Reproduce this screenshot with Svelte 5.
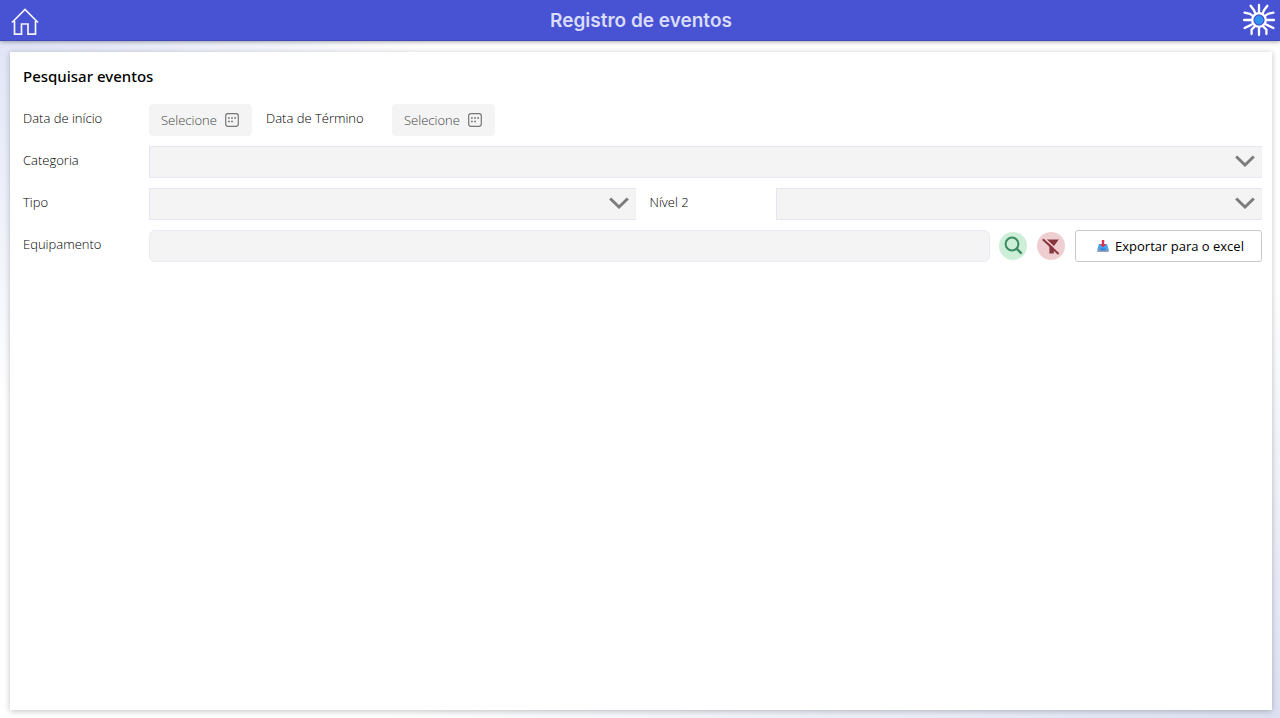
<script>
  let category = $state('');
  let type = $state('');
  let level = $state('');
  let equipment = $state('');
</script>

{#snippet calendar()}
  <svg class="calendar" viewBox="0 0 14 14" aria-hidden="true">
    <rect x="0.7" y="0.7" width="12.6" height="12.6" rx="2.2" fill="none" stroke="#777" stroke-width="1.2" />
    <path d="M3 5h1.8M6.1 5h1.8M9.2 5h1.8M3 8.5h1.8M6.1 8.5h1.8" stroke="#777" stroke-width="1.5" />
  </svg>
{/snippet}

{#snippet chevron()}
  <svg class="chevron" viewBox="0 0 20 12" aria-hidden="true">
    <path d="M1.2 1.5L10 10L18.8 1.5" fill="none" stroke="#7d7d7d" stroke-width="3" />
  </svg>
{/snippet}

<div class="page">
  <header>
    <a class="home" href="#home" aria-label="Início">
      <svg viewBox="0 0 28 28" aria-hidden="true">
        <path d="M1 14.5L14 1.5L27 14.5M3.5 13V26.2H10.5V16H17V26.2H24.5V13" fill="none" stroke="#f4f4ff" stroke-width="1.7" />
      </svg>
    </a>
    <h1>Registro de eventos</h1>
    <svg class="logo" viewBox="-17 -17 34 34" aria-hidden="true">
      <g fill="none" stroke="#fff" stroke-width="2.3" stroke-linecap="round" stroke-linejoin="round">
        <circle r="6.8" />
        <path d="M0 -7V-15M0 7V15M-7 0H-15M7 0H15" />
        <path d="M3.6 -6L5 -9.8L8.4 -14.2M5.8 -3.8L9 -6.2L14.4 -7.4M5.8 3.8L9.4 5.6L14.4 8M3.8 6L7.4 9.6V14M-3.8 6L-7.4 9.6V14M-5.8 3.8L-9.4 5.6L-14.4 8M-5.8 -3.8L-9 -6.2L-14.4 -7.4M-3.6 -6L-5 -9.8L-8.4 -14.2" />
      </g>
      <circle r="4.4" fill="#3193ee" />
    </svg>
  </header>

  <main>
    <h2>Pesquisar eventos</h2>
    <form>
      <div class="row">
        <label for="start">Data de início</label>
        <button id="start" class="date" type="button">Selecione {@render calendar()}</button>
        <label class="next" for="end">Data de Término</label>
        <button id="end" class="date" type="button">Selecione {@render calendar()}</button>
      </div>
      <div class="row">
        <label for="category">Categoria</label>
        <div class="pick">
          <select id="category" bind:value={category}><option value=""></option></select>
          {@render chevron()}
        </div>
      </div>
      <div class="row">
        <label for="type">Tipo</label>
        <div class="pick">
          <select id="type" bind:value={type}><option value=""></option></select>
          {@render chevron()}
        </div>
        <label class="next" for="level">Nível 2</label>
        <div class="pick">
          <select id="level" bind:value={level}><option value=""></option></select>
          {@render chevron()}
        </div>
      </div>
      <div class="row">
        <label for="equipment">Equipamento</label>
        <input id="equipment" type="text" bind:value={equipment} />
        <div class="actions">
          <button class="round search" type="button" aria-label="Pesquisar">
            <svg viewBox="0 0 28 28" aria-hidden="true">
              <g fill="none" stroke="#3c8a60" stroke-width="2">
                <circle cx="13" cy="12" r="6.4" />
                <path d="M17.6 16.6L22.6 21.6" stroke-width="2.4" />
              </g>
            </svg>
          </button>
          <button class="round clear" type="button" aria-label="Limpar filtros">
            <svg viewBox="0 0 28 28" aria-hidden="true">
              <path d="M9.5 7.5H21.8L16.8 14.2V21.5H12.4V14.2Z" fill="#87353f" />
              <path d="M7.6 6.4L23.2 21" stroke="#efced2" stroke-width="1.6" />
              <path d="M5.8 7.2L21.6 22" stroke="#87353f" stroke-width="1.9" />
            </svg>
          </button>
          <button class="export" type="button">
            <svg viewBox="0 0 12 14" aria-hidden="true">
              <path d="M2 5H10L11.5 10V12.5H0.5V10Z" fill="#46a5ee" />
              <path d="M0.5 10.5H11.5V12.8H0.5Z" fill="#8796b8" />
              <path d="M3 9.5H9L8 11.2H4Z" fill="#2f7fd6" />
              <path d="M4.8 1H7.2V5H9.2L6 8.6L2.8 5H4.8Z" fill="#d63350" />
            </svg>
            Exportar para o excel
          </button>
        </div>
      </div>
    </form>
  </main>
</div>

<style>
  :global(body) {
    margin: 0;
  }

  .page {
    box-sizing: border-box;
    min-height: 100vh;
    display: flex;
    flex-direction: column;
    font-family: 'Open Sans', sans-serif;
    font-size: 13px;
    font-weight: 300;
    color: #000;
    background:
      radial-gradient(ellipse 420px 400px at 0 0, #dde2f6, transparent),
      radial-gradient(ellipse 900px 420px at 100% 100%, #dce0f2, transparent),
      #fff;
  }

  header {
    height: 40px;
    display: grid;
    grid-template-columns: 1fr auto 1fr;
    align-items: center;
    padding: 0 4px 0 11px;
    background: #4853d4;
    border-bottom: 1px solid #4049bc;
    box-shadow: 0 1px 4px rgba(0, 0, 0, 0.35);
  }

  .home {
    width: 28px;
    height: 28px;
    margin-top: 3px;
  }

  .home svg {
    display: block;
  }

  h1 {
    margin: 0 5px 0 0;
    font-family: Inter, sans-serif;
    font-size: 19px;
    font-weight: 600;
    color: #d9dcfa;
  }

  .logo {
    width: 34px;
    height: 34px;
    justify-self: end;
  }

  main {
    flex: 1;
    margin: 11px 8px 8px 10px;
    padding: 13px 10px 13px 13px;
    background: #fff;
    box-shadow: 0 1px 6px rgba(0, 0, 0, 0.25);
  }

  h2 {
    margin: 0 0 17px;
    font-family: 'Noto Sans', sans-serif;
    font-size: 15px;
    line-height: 22px;
    font-weight: 500;
    color: #000;
  }

  form {
    display: grid;
    gap: 10px;
  }

  .row {
    display: flex;
    height: 32px;
  }

  label {
    flex: none;
    width: 126px;
    line-height: 29px;
  }

  .next {
    margin-left: 14px;
  }

  button,
  select,
  input {
    box-sizing: border-box;
    margin: 0;
    font: inherit;
    color: inherit;
  }

  .date {
    width: 103px;
    padding: 0 13px 0 12px;
    display: flex;
    align-items: center;
    justify-content: space-between;
    border: 0;
    border-radius: 4px;
    background: #f4f4f4;
    color: #444;
  }

  .calendar {
    width: 14px;
    height: 14px;
  }

  .pick {
    position: relative;
    flex: 1;
  }

  select {
    display: block;
    width: 100%;
    height: 32px;
    padding: 0 32px 0 8px;
    appearance: none;
    border: 1px solid #e4e7f1;
    border-right-color: #f0f1f5;
    border-radius: 0;
    background: #f4f4f4;
  }

  .chevron {
    position: absolute;
    top: 9px;
    right: 7px;
    width: 20px;
    height: 12px;
    pointer-events: none;
  }

  input {
    flex: 1;
    min-width: 0;
    padding: 0 8px;
    border: 1px solid #e9ebf2;
    border-radius: 6px;
    background: #f4f4f4;
  }

  .actions {
    display: flex;
    align-items: center;
    gap: 10px;
    margin-left: 9px;
  }

  .round {
    width: 28px;
    height: 28px;
    padding: 0;
    border: 0;
    border-radius: 50%;
  }

  .round svg {
    display: block;
  }

  .search {
    background: #cdefd8;
  }

  .clear {
    background: #efced2;
  }

  .export {
    width: 187px;
    height: 32px;
    padding: 0 0 0 4px;
    display: flex;
    align-items: center;
    justify-content: center;
    gap: 6px;
    border: 1px solid #c8c8c8;
    border-radius: 3px;
    background: #fff;
    font-weight: 400;
  }

  .export svg {
    width: 12px;
    height: 14px;
  }
</style>
